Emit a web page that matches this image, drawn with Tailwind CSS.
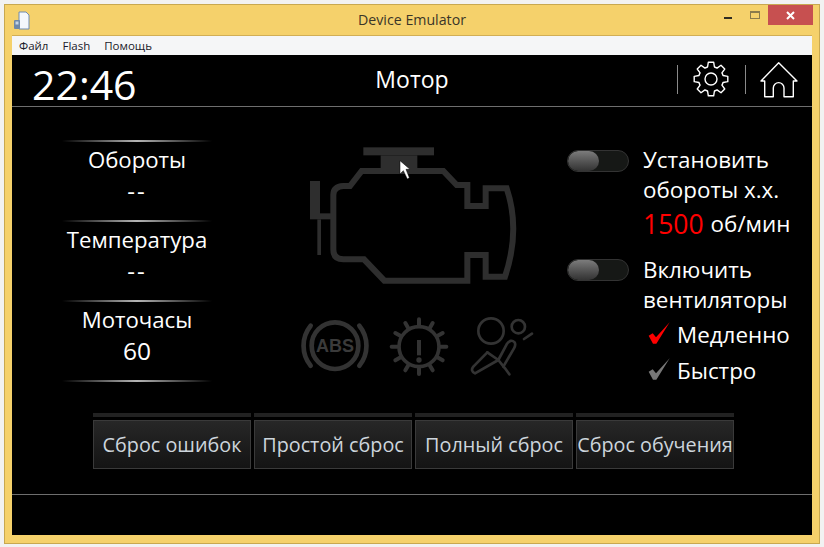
<!DOCTYPE html>
<html lang="ru">
<head>
  <meta charset="UTF-8" />
  <title>Device Emulator</title>
  <script src="https://cdn.jsdelivr.net/npm/@tailwindcss/browser@4"></script>
</head>
<body class="bg-[#f2f2f2] font-['Open_Sans',sans-serif] w-[824px] h-[547px] overflow-hidden pt-[4px] pl-[4px]">
  <div class="relative w-[816px] h-[540px] border border-[#c8a850] bg-[#f5d16b] flex flex-col">

    <!-- title bar -->
    <div class="relative h-[30px] shrink-0 flex items-center justify-center text-[14.2px] text-[#3a3528]">
      <span class="mt-[-1px]">Device Emulator</span>
      <svg class="absolute left-[8px] top-[6px]" width="17" height="19" viewBox="0 0 17 19">
        <path d="M6 1h7l3 3v14H6z" fill="#f4f7fb" stroke="#6f8bb0" stroke-width="1"/>
        <rect x="1" y="9" width="6" height="9" rx="1" fill="#6f88a8"/>
        <rect x="2.5" y="10.5" width="3" height="3" fill="#c4d4e6"/>
      </svg>
      <div class="absolute left-[719px] top-[12px] w-[8px] h-[2px] bg-[#2f2c22]"></div>
      <div class="absolute left-[745px] top-[6px] w-[10px] h-[8px] border border-[#8a7b4c] border-t-2"></div>
      <div class="absolute left-[763px] top-0 w-[45px] h-[20px] bg-[#c75050] flex items-center justify-center">
        <svg width="9" height="9" viewBox="0 0 9 9"><path d="M1 1l7 7M8 1l-7 7" stroke="#fff" stroke-width="2"/></svg>
      </div>
    </div>

    <div class="w-[800px] mx-[7px] flex flex-col border-t border-[#d1ae55]">
      <!-- menu -->
      <div class="h-[19px] bg-[#f5f6f7] flex items-center text-[11.5px] text-[#1a1a2a] pl-[7px] gap-[14px]">
        <span>Файл</span><span>Flash</span><span>Помощь</span>
      </div>

      <!-- panel -->
      <div class="h-[480px] bg-black text-white flex flex-col">
        <header class="relative h-[52px] shrink-0 border-b border-[#6e6e6e] flex items-center justify-center">
          <span class="absolute left-[20px] top-[3px] text-[41px] leading-[52px]">22:46</span>
          <span class="text-[23px] mt-[-3px]">Мотор</span>
          <div class="absolute left-[665px] top-[10px] w-px h-[29px] bg-[#8a8a8a]"></div>
          <svg class="absolute left-[680px] top-[5px]" width="38" height="38" viewBox="-19 -19 38 38" fill="none" stroke="#fff" stroke-width="1.4" stroke-linejoin="round">
            <path d="M-3.45 -12 L-2.66 -16.8 L2.66 -16.8 L3.45 -12 A12.5 12.5 0 0 1 6.06 -10.93 L9.99 -13.75 L13.75 -9.99 L10.93 -6.06 A12.5 12.5 0 0 1 12.02 -3.45 L16.8 -2.66 L16.8 2.66 L12.02 3.45 A12.5 12.5 0 0 1 10.93 6.06 L13.75 9.99 L9.99 13.75 L6.06 10.93 A12.5 12.5 0 0 1 3.45 12 L2.66 16.8 L-2.66 16.8 L-3.45 12 A12.5 12.5 0 0 1 -6.06 10.93 L-9.99 13.75 L-13.75 9.99 L-10.93 6.06 A12.5 12.5 0 0 1 -12.02 3.45 L-16.8 2.66 L-16.8 -2.66 L-12.02 -3.45 A12.5 12.5 0 0 1 -10.93 -6.06 L-13.75 -9.99 L-9.99 -13.75 L-6.06 -10.93 A12.5 12.5 0 0 1 -3.45 -12 Z"/>
            <circle r="6"/>
          </svg>
          <div class="absolute left-[733px] top-[10px] w-px h-[29px] bg-[#8a8a8a]"></div>
          <svg class="absolute left-[747px] top-[6px]" width="40" height="40" viewBox="0 0 40 40" fill="none" stroke="#fff" stroke-width="1.4" stroke-linejoin="round">
            <path d="M19.7 1.7 L2 20 H5.7 V35.7 H14.3 V27 A5.3 5.3 0 0 1 25 27 V35.7 H34.3 V20 H38 Z"/>
          </svg>
        </header>

        <main class="h-[306px] shrink-0 flex">
          <!-- readouts -->
          <div class="w-[150px] ml-[50px] pt-[33px] text-center text-[22.2px] shrink-0">
            <div class="h-[80px] flex flex-col">
              <div class="h-[2px] bg-linear-to-r from-transparent via-[#b5b5b5] to-transparent"></div>
              <div class="leading-[30px] mt-[3px]">Обороты</div>
              <div class="leading-[30px] mt-px text-[24px] tracking-[2px]">--</div>
            </div>
            <div class="h-[80px] flex flex-col">
              <div class="h-[2px] bg-linear-to-r from-transparent via-[#b5b5b5] to-transparent"></div>
              <div class="leading-[30px] mt-[3px] whitespace-nowrap">Температура</div>
              <div class="leading-[30px] mt-px text-[24px] tracking-[2px]">--</div>
            </div>
            <div class="h-[80px] flex flex-col">
              <div class="h-[2px] bg-linear-to-r from-transparent via-[#b5b5b5] to-transparent"></div>
              <div class="leading-[30px] mt-[3px]">Моточасы</div>
              <div class="leading-[30px] mt-px text-[24.5px]">60</div>
            </div>
            <div class="h-[2px] bg-linear-to-r from-transparent via-[#b5b5b5] to-transparent"></div>
          </div>

          <!-- engine and warning lamps -->
          <div class="w-[355px] shrink-0 pl-[78px] pt-[23px] flex flex-col gap-[5px]">
            <svg width="250" height="170" viewBox="0 0 750 510">
              <g fill="#2e2e2e">
                <rect x="220" y="52" width="212" height="24"/>
                <rect x="272" y="76" width="110" height="56"/>
                <rect x="60" y="153" width="30" height="115"/>
                <rect x="90" y="250" width="40" height="18"/>
                <rect x="82" y="268" width="11" height="107"/>
              </g>
              <path d="M215 123 H460 L500 165 H532 V228 H587 V175 H650 Q692 300 645 440 H587 V375 H532 V452 H283 L222 388 H160 Q130 388 130 358 V195 Q130 170 160 168 H180 Z" fill="none" stroke="#2e2e2e" stroke-width="18"/>
              <path d="M330 92 V132 L340 122 L352 147 L358 143 L348 118 H360 Z" fill="#fff" stroke="#000" stroke-width="1.5"/>
            </svg>
            <svg width="250" height="85" viewBox="0 0 750 255" fill="none" stroke="#333">
              <circle cx="135" cy="122" r="70" stroke-width="14"/>
              <path d="M62 62 A95 95 0 0 0 62 182 M208 62 A95 95 0 0 1 208 182" stroke-width="14" stroke-linecap="round"/>
              <text x="135" y="141" text-anchor="middle" fill="#3a3a3a" stroke="none" font-family="Liberation Sans" font-weight="700" font-size="54">ABS</text>
              <circle cx="387" cy="125" r="60" stroke-width="11"/>
              <g stroke-width="12" stroke-linecap="round">
                <path d="M387 60 V43"/>
                <path d="M387 60 V43" transform="rotate(30 387 125)"/>
                <path d="M387 60 V43" transform="rotate(60 387 125)"/>
                <path d="M387 60 V43" transform="rotate(90 387 125)"/>
                <path d="M387 60 V43" transform="rotate(120 387 125)"/>
                <path d="M387 60 V43" transform="rotate(150 387 125)"/>
                <path d="M387 60 V43" transform="rotate(180 387 125)"/>
                <path d="M387 60 V43" transform="rotate(210 387 125)"/>
                <path d="M387 60 V43" transform="rotate(240 387 125)"/>
                <path d="M387 60 V43" transform="rotate(270 387 125)"/>
                <path d="M387 60 V43" transform="rotate(300 387 125)"/>
                <path d="M387 60 V43" transform="rotate(330 387 125)"/>
              </g>
              <rect x="381" y="105" width="12" height="46" fill="#333" stroke="none"/>
              <circle cx="387" cy="165" r="8" fill="#333" stroke="none"/>
              <g stroke-width="8" stroke-linecap="round" stroke-linejoin="round">
                <circle cx="603" cy="78" r="38"/>
                <circle cx="685" cy="65" r="20"/>
                <path d="M702 102 L726 86"/>
                <path d="M592 142 L550 185 Q540 198 555 205 L625 165 L645 190 L658 208"/>
                <path d="M592 142 L625 165 L650 118 Q662 100 674 112 Q678 120 672 130 L640 185"/>
              </g>
            </svg>
          </div>

          <!-- switches -->
          <div class="pt-[38px] flex flex-col text-[22.4px] leading-[30px] whitespace-nowrap">
            <div class="flex gap-[14px]">
              <div class="w-[62px] h-[22px] mt-[5px] rounded-full border border-[#333] bg-[#161816] overflow-hidden shrink-0">
                <div class="w-[31px] h-full rounded-full bg-linear-to-b from-[#7c7c7c] to-[#333]"></div>
              </div>
              <div>
                <div>Установить</div>
                <div>обороты х.х.</div>
                <div class="mt-[4px] flex items-center gap-[7px] h-[30px]"><span class="text-[#ff0000] text-[26.5px] leading-none font-medium">1500</span> об/мин</div>
              </div>
            </div>
            <div class="flex gap-[14px] mt-[16px]">
              <div class="w-[62px] h-[22px] mt-[4px] rounded-full border border-[#333] bg-[#161816] overflow-hidden shrink-0">
                <div class="w-[31px] h-full rounded-full bg-linear-to-b from-[#7c7c7c] to-[#333]"></div>
              </div>
              <div>
                <div>Включить</div>
                <div>вентиляторы</div>
                <div class="mt-[5px] flex items-center gap-[6px] pl-[3px]">
                  <svg class="mb-[5px]" width="25" height="25" viewBox="270 560 75 75"><path d="M278 607 L290 600 L300 612 L341 567 L301 631 L291 631 Z" fill="#ff0000"/></svg>
                  Медленно
                </div>
                <div class="mt-[6px] flex items-center gap-[6px] pl-[3px]">
                  <svg class="mb-[5px]" width="25" height="25" viewBox="270 560 75 75"><path d="M278 607 L290 600 L300 612 L341 567 L301 631 L291 631 Z" fill="#777"/></svg>
                  Быстро
                </div>
              </div>
            </div>
          </div>
        </main>

        <!-- reset buttons -->
        <div class="h-[56px] shrink-0 flex gap-[3px] pl-[81px] text-[19.8px] text-[#cdd5dc]">
          <div class="w-[158px] flex flex-col gap-[3px]">
            <div class="h-[4px] bg-[#222]"></div>
            <button class="h-[49px] border border-[#3a3a3a] bg-linear-to-b from-[#272727] to-[#141414] whitespace-nowrap">Сброс ошибок</button>
          </div>
          <div class="w-[158px] flex flex-col gap-[3px]">
            <div class="h-[4px] bg-[#222]"></div>
            <button class="h-[49px] border border-[#3a3a3a] bg-linear-to-b from-[#272727] to-[#141414] whitespace-nowrap">Простой сброс</button>
          </div>
          <div class="w-[158px] flex flex-col gap-[3px]">
            <div class="h-[4px] bg-[#222]"></div>
            <button class="h-[49px] border border-[#3a3a3a] bg-linear-to-b from-[#272727] to-[#141414] whitespace-nowrap">Полный сброс</button>
          </div>
          <div class="w-[158px] flex flex-col gap-[3px]">
            <div class="h-[4px] bg-[#222]"></div>
            <button class="h-[49px] border border-[#3a3a3a] bg-linear-to-b from-[#272727] to-[#141414] whitespace-nowrap">Сброс обучения</button>
          </div>
        </div>

        <div class="mt-[25px] h-px bg-[#6e6e6e]"></div>
      </div>
    </div>
  </div>
</body>
</html>
